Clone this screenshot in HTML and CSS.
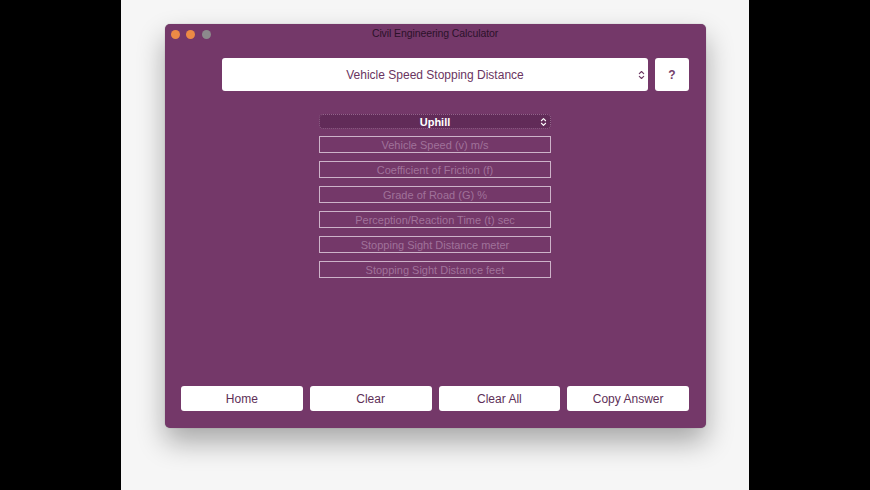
FILE: index.html
```html
<!DOCTYPE html>
<html>
<head>
<meta charset="utf-8">
<link rel="stylesheet" href="styles.css">
</head>
<body>
<div class="stage">
  <div class="bar"></div>
  <div class="desk">
    <div class="window">
      <div class="titlebar">
        <div class="lights">
          <span class="light orange"></span>
          <span class="light orange"></span>
          <span class="light grey"></span>
        </div>
        <div class="title">Civil Engineering Calculator</div>
      </div>
      <div class="toprow">
        <div class="mainselect">
          <span class="mainselect-text">Vehicle Speed Stopping Distance</span>
          <svg class="chev chev-dark" viewBox="0 0 8 12" width="7" height="11"><path d="M1.5 4.5 L4 2 L6.5 4.5 M1.5 7.5 L4 10 L6.5 7.5" fill="none" stroke="#6d3a63" stroke-width="1.3" stroke-linecap="round" stroke-linejoin="round"/></svg>
        </div>
        <div class="help">?</div>
      </div>
      <div class="form">
        <div class="subselect">
          <span class="subselect-text">Uphill</span>
          <svg class="chev chev-light" viewBox="0 0 8 12" width="7" height="10"><path d="M1.5 4.5 L4 2 L6.5 4.5 M1.5 7.5 L4 10 L6.5 7.5" fill="none" stroke="#ffffff" stroke-width="1.3" stroke-linecap="round" stroke-linejoin="round"/></svg>
        </div>
        <div class="field">Vehicle Speed (v) m/s</div>
        <div class="field">Coefficient of Friction (f)</div>
        <div class="field">Grade of Road (G) %</div>
        <div class="field">Perception/Reaction Time (t) sec</div>
        <div class="field">Stopping Sight Distance meter</div>
        <div class="field">Stopping Sight Distance feet</div>
      </div>
      <div class="buttons">
        <div class="btn">Home</div>
        <div class="btn">Clear</div>
        <div class="btn">Clear All</div>
        <div class="btn">Copy Answer</div>
      </div>
    </div>
  </div>
  <div class="bar"></div>
</div>
</body>
</html>
```
FILE: styles.css
```css
html, body {
  margin: 0;
  padding: 0;
  background: #000;
  font-family: "Liberation Sans", Arial, sans-serif;
}
.stage {
  display: flex;
  width: 870px;
  height: 490px;
}
.bar {
  width: 121px;
  background: #000;
  flex: none;
}
.desk {
  width: 628px;
  flex: none;
  background: #f6f6f6;
  padding: 24px 0 0 43.5px;
  box-sizing: border-box;
}
.window {
  width: 541px;
  height: 404px;
  background: #743869;
  border-radius: 5px;
  box-shadow: 0 14px 28px rgba(0,0,0,0.32), 0 0 1px rgba(0,0,0,0.4);
  display: flex;
  flex-direction: column;
  position: relative;
}
.titlebar {
  height: 19px;
  display: flex;
  align-items: center;
  position: relative;
}
.lights {
  display: flex;
  gap: 6.5px;
  padding-left: 6px;
  padding-top: 1px;
}
.light {
  width: 9px;
  height: 9px;
  border-radius: 50%;
  display: block;
}
.orange { background: #ec8a45; }
.grey { background: #8c8a8c; }
.title {
  position: absolute;
  left: 0;
  right: 0;
  top: 3px;
  text-align: center;
  font-size: 10.5px;
  color: #2b1229;
  letter-spacing: -0.1px;
}
.toprow {
  display: flex;
  gap: 7px;
  margin-top: 15px;
  padding-left: 57.5px;
  height: 33px;
}
.mainselect {
  width: 426px;
  background: #fff;
  border-radius: 3px;
  display: flex;
  align-items: center;
  justify-content: center;
  position: relative;
}
.mainselect-text {
  font-size: 12px;
  color: #6a3461;
}
.chev {
  position: absolute;
  top: 50%;
  transform: translateY(-50%);
}
.chev-dark { right: 3px; }
.chev-light { right: 3px; }
.help {
  width: 34px;
  background: #fff;
  border-radius: 3px;
  display: flex;
  align-items: center;
  justify-content: center;
  font-size: 12px;
  font-weight: bold;
  color: #74406b;
}
.form {
  display: flex;
  flex-direction: column;
  align-items: center;
  gap: 8px;
  margin-top: 23px;
  flex: 1;
}
.subselect {
  width: 232px;
  height: 15px;
  box-sizing: border-box;
  background: #612b58;
  border: 1px dotted #93638b;
  border-radius: 4px;
  display: flex;
  align-items: center;
  justify-content: center;
  position: relative;
  margin-bottom: -1px;
}
.subselect-text {
  font-size: 11px;
  font-weight: bold;
  color: #fff;
}
.field {
  width: 232px;
  height: 17px;
  box-sizing: border-box;
  border: 1px solid #cdb3c9;
  font-size: 11px;
  color: #a0729a;
  display: flex;
  align-items: center;
  justify-content: center;
}
.buttons {
  display: flex;
  gap: 7px;
  padding: 0 16.5px;
  margin-bottom: 17px;
}
.btn {
  flex: 1;
  height: 25px;
  background: #fff;
  border-radius: 3px;
  display: flex;
  align-items: center;
  justify-content: center;
  font-size: 12px;
  color: #5e2f57;
}
```
